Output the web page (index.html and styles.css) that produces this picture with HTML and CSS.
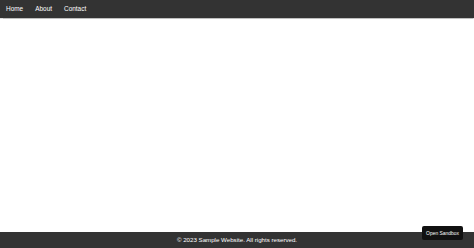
FILE: index.html
```html
<!DOCTYPE html>
<html lang="en">
<head>
<meta charset="utf-8">
<title>Sample Website</title>
<link rel="stylesheet" href="styles.css">
</head>
<body>
<nav class="topnav">
  <a class="navlink" href="#">Home</a>
  <a class="navlink" href="#">About</a>
  <a class="navlink" href="#">Contact</a>
</nav>
<main class="content"></main>
<footer class="footer">© 2023 Sample Website. All rights reserved.</footer>
<a class="sandbox-btn" href="#">Open Sandbox</a>
</body>
</html>
```
FILE: styles.css
```css
html, body {
  margin: 0;
  padding: 0;
  height: 100%;
}
body {
  font-family: "Liberation Sans", Arial, sans-serif;
  background: #fff;
  display: flex;
  flex-direction: column;
}
.topnav {
  box-sizing: border-box;
  height: 18px;
  background: #333;
  display: flex;
  align-items: flex-start;
  gap: 12px;
  padding: 5px 6px 0;
  box-shadow: 0 0.5px 1px rgba(0,0,0,0.25);
}
.navlink {
  color: #fff;
  text-decoration: none;
  font-size: 6.45px;
}
.content {
  flex: 1;
}
.footer {
  box-sizing: border-box;
  height: 16px;
  background: #333;
  color: #fff;
  text-align: center;
  font-size: 6.15px;
  padding-top: 4px;
}
.sandbox-btn {
  position: fixed;
  right: 11px;
  bottom: 8px;
  box-sizing: border-box;
  height: 14px;
  padding: 0 4px;
  display: flex;
  align-items: center;
  background: #111;
  color: #fff;
  font-size: 4.95px;
  text-decoration: none;
  border-radius: 2px;
}
```
